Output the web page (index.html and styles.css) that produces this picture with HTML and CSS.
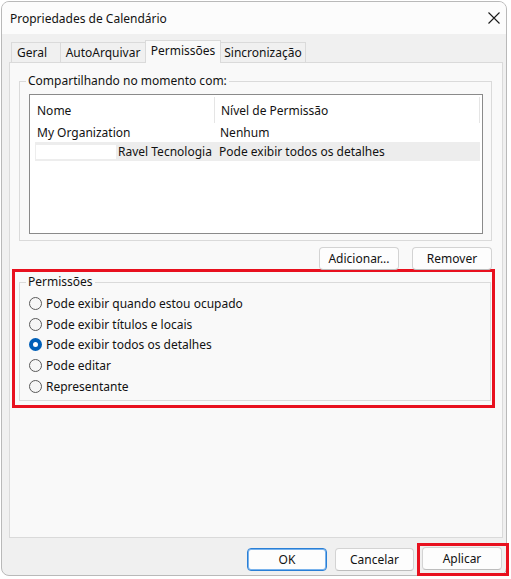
FILE: index.html
```html
<!DOCTYPE html>
<html lang="pt">
<head>
    <meta charset="UTF-8">
    <title>Propriedades de Calendário</title>
    <link rel="stylesheet" href="styles.css">
</head>
<body>
    <div class="window">
        <div class="titlebar">
            <span class="title">Propriedades de Calendário</span>
            <svg class="close" width="12" height="12" viewBox="0 0 12 12">
                <path d="M0.5 0.5 L11.5 11.5 M11.5 0.5 L0.5 11.5" stroke="#1a1a1a" stroke-width="1.1" fill="none"/>
            </svg>
        </div>

        <div class="tabs">
            <div class="tab first" style="width: 50px">Geral</div>
            <div class="tab" style="width: 86px">AutoArquivar</div>
            <div class="tab active" style="width: 76px">Permissões</div>
            <div class="tab" style="width: 86px">Sincronização</div>
        </div>

        <div class="panel">
            <fieldset class="group sharing">
                <legend>Compartilhando no momento com:</legend>
                <div class="listbox">
                    <div class="list-head">
                        <div class="col-name">Nome</div>
                        <div class="col-level">Nível de Permissão</div>
                    </div>
                    <div class="row">
                        <div class="col-name">My Organization</div>
                        <div class="col-level">Nenhum</div>
                    </div>
                    <div class="row selected">
                        <div class="col-name"><span class="blank"></span>Ravel Tecnologia</div>
                        <div class="col-level">Pode exibir todos os detalhes</div>
                    </div>
                </div>
            </fieldset>

            <div class="list-actions">
                <button class="btn" style="width: 80px">Adicionar...</button>
                <button class="btn" style="width: 80px">Remover</button>
            </div>

            <div class="highlight">
                <fieldset class="group perms">
                    <legend>Permissões</legend>
                    <label class="radio"><span class="dot"></span>Pode exibir quando estou ocupado</label>
                    <label class="radio"><span class="dot"></span>Pode exibir títulos e locais</label>
                    <label class="radio"><span class="dot checked"></span>Pode exibir todos os detalhes</label>
                    <label class="radio"><span class="dot"></span>Pode editar</label>
                    <label class="radio"><span class="dot"></span>Representante</label>
                </fieldset>
            </div>
        </div>

        <div class="footer">
            <button class="btn default">OK</button>
            <button class="btn cancel">Cancelar</button>
            <div class="highlight small">
                <button class="btn">Aplicar</button>
            </div>
        </div>
    </div>
</body>
</html>
```

FILE: styles.css
```css
:root {
    --text: #121212;
    --frame: #f0f0f0;
    --panel: #f9f9f9;
    --line: #dadada;
    --accent: #005fb8;
    --mark: #e8101e;
}

body {
    margin: 0;
    background-color: #ffffff;
    font-family: 'Noto Sans', 'Open Sans', sans-serif;
    font-size: 12px;
    color: var(--text);
}

.window {
    margin: 1px 0 0 1px;
    width: 506px;
    height: 575px;
    border: 1px solid #b9b9b9;
    border-radius: 8px;
    background-color: var(--frame);
    box-sizing: border-box;
}

.titlebar {
    height: 32px;
    background-color: #fcfcfc;
    border-radius: 7px 7px 0 0;
    display: flex;
    align-items: center;
    justify-content: space-between;
    padding: 0 6px 0 8px;
}

.title {
    font-size: 12px;
}

.tabs {
    display: flex;
    align-items: flex-end;
    height: 28px;
    padding-left: 9px;
    box-sizing: border-box;
}

.tab {
    height: 20px;
    line-height: 19px;
    text-align: center;
    background-color: #f0f0f0;
    border: 1px solid var(--line);
    border-bottom: none;
    margin-right: -1px;
    box-sizing: border-box;
}

.tab.first {
    text-align: left;
    padding-left: 5px;
}

.tab.active {
    height: 23px;
    line-height: 20px;
    background-color: var(--panel);
    position: relative;
    margin-bottom: -1px;
    z-index: 1;
}

.panel {
    margin-left: 7px;
    width: 494px;
    height: 476px;
    background-color: var(--panel);
    border: 1px solid var(--line);
    box-sizing: border-box;
    padding: 10px 10px 0 9px;
}

.group {
    margin: 0;
    border: 1px solid var(--line);
    padding: 0;
    min-width: 0;
}

.group legend {
    margin-left: -3px;
    padding: 0 2px;
    line-height: 16px;
}

.sharing {
    padding: 5px 8px 6px 9px;
}

.listbox {
    height: 140px;
    background-color: #ffffff;
    border: 1px solid #8a8a8a;
    box-sizing: border-box;
    padding: 2px 1px 0 5px;
}

.list-head,
.row {
    display: flex;
}

.list-head {
    height: 26px;
    align-items: center;
}

.list-head .col-name {
    border-right: 1px solid #e5e5e5;
    align-self: stretch;
    display: flex;
    align-items: center;
}

.list-head .col-level {
    flex: 1;
    border-right: 1px solid #e5e5e5;
    align-self: stretch;
    display: flex;
    align-items: center;
    margin-right: 1px;
}

.col-name {
    width: 177px;
    padding-left: 2px;
    flex-shrink: 0;
}

.col-level {
    padding-left: 6px;
}

.row {
    height: 19px;
    line-height: 19px;
}

.row.selected {
    background-color: #ededed;
    margin-right: 1px;
}

.row.selected .col-name {
    display: flex;
    align-items: center;
    padding-left: 1px;
}

.blank {
    width: 80px;
    height: 14px;
    background-color: #ffffff;
    margin-right: 2px;
}

.list-actions {
    display: flex;
    justify-content: flex-end;
    gap: 13px;
    margin-top: 6px;
}

.btn {
    height: 23px;
    font-family: inherit;
    font-size: 12px;
    color: var(--text);
    background-color: #fdfdfd;
    border: 1px solid #d3d3d3;
    border-bottom-color: #bdbdbd;
    border-radius: 4px;
    padding: 0;
}

.highlight {
    border: 3px solid var(--mark);
    margin: -1px -3px 0 -7px;
    padding: 2px 1px 4px 4px;
}

.perms {
    padding: 3px 0 4px 9px;
}

.radio {
    display: flex;
    align-items: center;
    height: 20.7px;
}

.dot {
    width: 13px;
    height: 13px;
    border: 1px solid #5a5a5a;
    border-radius: 50%;
    background-color: #f6f6f6;
    box-sizing: border-box;
    margin-right: 4px;
    flex-shrink: 0;
}

.dot.checked {
    border: 4px solid var(--accent);
    background-color: #ffffff;
}

.footer {
    display: flex;
    justify-content: flex-end;
    align-items: center;
    padding-top: 5px;
}

.footer .btn {
    width: 80px;
}

.btn.default {
    border: 1px solid #2a7fd6;
    box-shadow: inset 0 0 0 1px #78b2ec;
    margin-right: 8px;
}

.btn.cancel {
    width: 79px;
    margin-right: 3px;
}

.highlight.small {
    margin: 0 -3px 0 0;
    padding: 1px 4px 3px 2px;
}
```
